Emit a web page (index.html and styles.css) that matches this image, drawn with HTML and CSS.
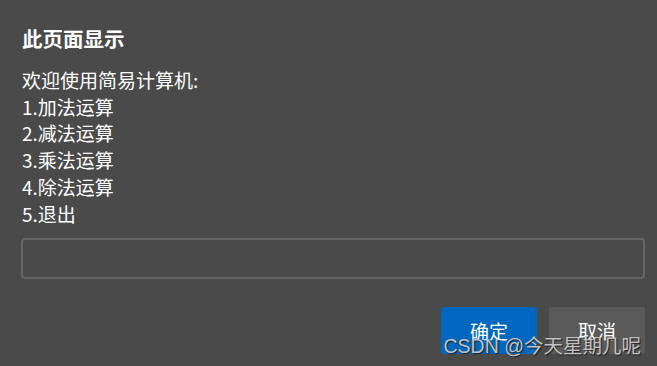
FILE: index.html
```html
<!DOCTYPE html>
<html lang="zh-CN">
<head>
<meta charset="utf-8">
<title>此页面显示</title>
<link rel="stylesheet" href="styles.css">
</head>
<body>
<div class="dialog">
  <h1 class="title">此页面显示</h1>
  <div class="message">欢迎使用简易计算机:<br>1.加法运算<br>2.减法运算<br>3.乘法运算<br>4.除法运算<br>5.退出</div>
  <input class="prompt-input" type="text">
  <div class="actions">
    <button class="btn btn-primary">确定</button>
    <button class="btn btn-secondary">取消</button>
  </div>
  <div class="watermark">CSDN @今天星期几呢</div>
</div>
</body>
</html>
```
FILE: styles.css
```css
html, body {
  margin: 0;
  padding: 0;
  background: #4a4a4a;
  width: 657px;
  height: 366px;
  overflow: hidden;
}
.dialog {
  position: relative;
  height: 366px;
  box-sizing: border-box;
  padding: 25px 12px 0 21px;
  font-family: "Microsoft YaHei", "Noto Sans CJK SC", "Noto Sans", sans-serif;
  color: #ffffff;
}
.title {
  margin: 0 0 16px 1px;
  font-size: 20.5px;
  font-weight: bold;
  line-height: 26px;
}
.message {
  margin-left: 1px;
  font-size: 19px;
  line-height: 26.7px;
}
.prompt-input {
  display: block;
  margin: 11px 0 0 0;
  width: 624px;
  height: 41px;
  box-sizing: border-box;
  background: #4a4a4a;
  border: 2px solid #656565;
  border-radius: 4px;
  outline: none;
}
.actions {
  display: flex;
  justify-content: flex-end;
  gap: 12px;
  margin-top: 28px;
}
.btn {
  width: 96px;
  height: 47px;
  border: none;
  border-radius: 3px;
  color: #ffffff;
  font-family: "Microsoft YaHei", "Noto Sans CJK SC", sans-serif;
  font-size: 19px;
  padding: 0;
  line-height: 47px;
}
.btn-primary {
  background: #0067c0;
}
.btn-secondary {
  background: #5a5a5a;
}
.watermark {
  position: absolute;
  right: 16px;
  bottom: 9px;
  font-family: "Liberation Sans", "Noto Sans CJK SC", sans-serif;
  font-size: 19.5px;
  line-height: 22px;
  color: #c2c2c2;
  text-shadow: 1px 1px 1px #1e1e1e;
  white-space: nowrap;
}
```
